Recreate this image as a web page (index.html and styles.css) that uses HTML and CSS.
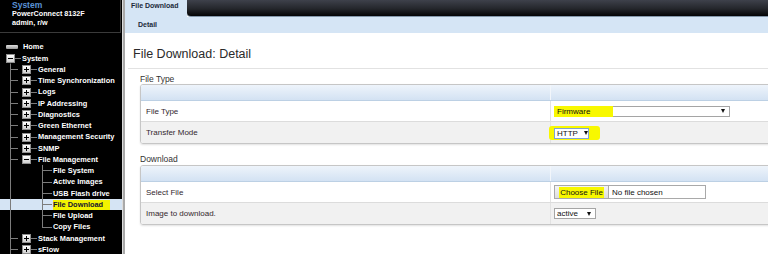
FILE: index.html
```html
<!DOCTYPE html>
<html>
<head>
<meta charset="utf-8">
<title>File Download</title>
<link rel="stylesheet" href="styles.css">
</head>
<body>
<div class="app">
  <aside class="sidebar">
    <div class="brand">
      <div class="brand-title">System</div>
      <div class="brand-line">PowerConnect 8132F</div>
      <div class="brand-line">admin, r/w</div>
    </div>
    <ul class="tree">
      <li class="row"><span class="cell"><i class="home-ico"></i></span><span class="label lp5">Home</span></li>
      <li class="row"><span class="cell tog down"><i class="box minus"></i></span><span class="label stub">System</span></li>
      <li class="row"><span class="cell j"></span><span class="cell tog"><i class="box plus"></i></span><span class="label stub">General</span></li>
      <li class="row"><span class="cell j"></span><span class="cell tog"><i class="box plus"></i></span><span class="label stub">Time Synchronization</span></li>
      <li class="row"><span class="cell j"></span><span class="cell tog"><i class="box plus"></i></span><span class="label stub">Logs</span></li>
      <li class="row"><span class="cell j"></span><span class="cell tog"><i class="box plus"></i></span><span class="label stub">IP Addressing</span></li>
      <li class="row"><span class="cell j"></span><span class="cell tog"><i class="box plus"></i></span><span class="label stub">Diagnostics</span></li>
      <li class="row"><span class="cell j"></span><span class="cell tog"><i class="box plus"></i></span><span class="label stub">Green Ethernet</span></li>
      <li class="row"><span class="cell j"></span><span class="cell tog"><i class="box plus"></i></span><span class="label stub">Management Security</span></li>
      <li class="row"><span class="cell j"></span><span class="cell tog"><i class="box plus"></i></span><span class="label stub">SNMP</span></li>
      <li class="row"><span class="cell j"></span><span class="cell tog"><i class="box minus"></i></span><span class="label stub">File Management</span></li>
      <li class="row"><span class="cell v"></span><span class="cell"></span><span class="cell j"></span><span class="label stub lv2">File System</span></li>
      <li class="row"><span class="cell v"></span><span class="cell"></span><span class="cell j"></span><span class="label stub lv2">Active Images</span></li>
      <li class="row"><span class="cell v"></span><span class="cell"></span><span class="cell j"></span><span class="label stub lv2">USB Flash drive</span></li>
      <li class="row current"><span class="cell v"></span><span class="cell"></span><span class="cell j"></span><span class="label stub lv2"><span class="marker">File Download</span></span></li>
      <li class="row"><span class="cell v"></span><span class="cell"></span><span class="cell j"></span><span class="label stub lv2">File Upload</span></li>
      <li class="row"><span class="cell v"></span><span class="cell"></span><span class="cell l"></span><span class="label stub lv2">Copy Files</span></li>
      <li class="row"><span class="cell j"></span><span class="cell tog"><i class="box plus"></i></span><span class="label stub">Stack Management</span></li>
      <li class="row"><span class="cell j"></span><span class="cell tog"><i class="box plus"></i></span><span class="label stub">sFlow</span></li>
    </ul>
  </aside>
  <main class="main">
    <div class="tabbar">
      <div class="tab">File Download</div>
      <div class="tabfill"></div>
    </div>
    <div class="subbar">Detail</div>
    <div class="content">
      <h1 class="title">File Download: Detail</h1>
      <div class="rule"></div>
      <section class="section">
        <div class="legend">File Type</div>
        <div class="grid">
          <div class="grow head"><div class="c1"></div><div class="c2"></div></div>
          <div class="grow r">
            <div class="c1">File Type</div>
            <div class="c2"><span class="sel wide"><span class="hl">Firmware</span><span class="caret"></span></span></div>
          </div>
          <div class="grow r alt">
            <div class="c1">Transfer Mode</div>
            <div class="c2"><span class="mark"><span class="sel focus">HTTP<span class="caret"></span></span></span></div>
          </div>
        </div>
      </section>
      <section class="section second">
        <div class="legend">Download</div>
        <div class="grid">
          <div class="grow head"><div class="c1"></div><div class="c2"></div></div>
          <div class="grow r">
            <div class="c1">Select File</div>
            <div class="c2"><span class="file"><span class="btn"><span class="hl2">Choose File</span></span><span class="fname">No file chosen</span></span></div>
          </div>
          <div class="grow r alt">
            <div class="c1">Image to download.</div>
            <div class="c2"><span class="sel small">active<span class="caret"></span></span></div>
          </div>
        </div>
      </section>
    </div>
  </main>
</div>
</body>
</html>
```
FILE: styles.css
```css
html, body {
  margin: 0;
  padding: 0;
  background: #fff;
  overflow: hidden;
  font-family: "Liberation Sans", Arial, sans-serif;
}

.app {
  display: flex;
  width: 768px;
  height: 254px;
  overflow: hidden;
}

/* ---------- sidebar ---------- */
.sidebar {
  width: 122px;
  flex: none;
  background: #000;
  border-right: 1px solid #dcdcdc;
  color: #fff;
  overflow: hidden;
}

.brand {
  width: 108px;
  height: 31px;
  padding: 1px 0 0 12px;
  border-right: 1px solid #3a3a3a;
  border-bottom: 1px solid #3a3a3a;
  line-height: 8.8px;
}

.brand-title {
  color: #5a92d6;
  font-weight: bold;
  font-size: 8.5px;
}

.brand-line {
  font-weight: bold;
  font-size: 7.2px;
  color: #fff;
}

.tree {
  list-style: none;
  margin: 0;
  padding: 8.4px 0 0 0;
}

.row {
  display: flex;
  height: 11.25px;
  padding-left: 2px;
  font-size: 7.4px;
  font-weight: bold;
  line-height: 11.25px;
  white-space: nowrap;
}

.cell {
  width: 16px;
  flex: none;
  display: flex;
  align-items: center;
}

.cell.v {
  background: linear-gradient(#7c7c7c, #7c7c7c) 8px 0 / 1px 100% no-repeat;
}

.cell.j {
  background:
    linear-gradient(#7c7c7c, #7c7c7c) 8px 0 / 1px 100% no-repeat,
    linear-gradient(#7c7c7c, #7c7c7c) 8px 50% / 8px 1px no-repeat;
}

.cell.l {
  background:
    linear-gradient(#7c7c7c, #7c7c7c) 8px 0 / 1px 50% no-repeat,
    linear-gradient(#7c7c7c, #7c7c7c) 8px 50% / 8px 1px no-repeat;
}

.cell.tog {
  background: linear-gradient(#7c7c7c, #7c7c7c) 12px 50% / 4px 1px no-repeat;
}

.cell.tog.down {
  background:
    linear-gradient(#7c7c7c, #7c7c7c) 12px 50% / 4px 1px no-repeat,
    linear-gradient(#7c7c7c, #7c7c7c) 8px 100% / 1px 50% no-repeat;
}

.box {
  display: block;
  width: 9px;
  height: 9px;
  box-sizing: border-box;
  margin-left: 4px;
  border: 1px solid #8e8e8e;
  position: relative;
  z-index: 1;
}

.box.plus {
  background:
    linear-gradient(#000, #000) center / 5px 1px no-repeat,
    linear-gradient(#000, #000) center / 1px 5px no-repeat,
    linear-gradient(#ffffff, #cfcfcf);
}

.box.minus {
  background:
    linear-gradient(#000, #000) center / 5px 1px no-repeat,
    linear-gradient(#ffffff, #cfcfcf);
}

.home-ico {
  display: block;
  width: 12px;
  height: 4px;
  margin-left: 4px;
  border-radius: 1px;
  background: linear-gradient(#e0e0e0, #9a9a9a);
}

.label {
  display: block;
}

.label.lp5 {
  padding-left: 5px;
}

.label.stub {
  padding-left: 4px;
  background: linear-gradient(#7c7c7c, #7c7c7c) 0 50% / 3px 1px no-repeat;
}

.label.stub.lv2 {
  padding-left: 3px;
  background: linear-gradient(#7c7c7c, #7c7c7c) 0 50% / 2px 1px no-repeat;
}

.row.current {
  background: #d5e4f4;
  color: #141430;
}

.marker {
  display: inline-block;
  line-height: 10px;
  padding-right: 7px;
  background: #f3f300;
}

/* ---------- main ---------- */
.main {
  flex: 1;
  min-width: 0;
  display: flex;
  flex-direction: column;
  border-left: 2px solid #a9a9a9;
  overflow: hidden;
}

.tabbar {
  display: flex;
  height: 17px;
  flex: none;
}

.tab {
  width: 56px;
  padding-left: 6px;
  background: #d5e5f5;
  font-size: 7px;
  font-weight: bold;
  color: #1c2a3a;
  line-height: 12px;
  white-space: nowrap;
}

.tabfill {
  flex: 1;
  height: 16px;
  background: linear-gradient(#3e414b, #24262b 55%, #040405);
  border-bottom: 1px solid #8497aa;
  border-bottom-left-radius: 4px;
}

.subbar {
  height: 16px;
  flex: none;
  background: #d5e5f5;
  padding-left: 13px;
  font-size: 7px;
  font-weight: bold;
  color: #1c2a3a;
  line-height: 16px;
}

.content {
  flex: 1;
  padding-left: 3px;
  color: #333;
}

.title {
  margin: 13px 0 0 5px;
  font-family: "Liberation Sans", Arial, sans-serif;
  font-weight: normal;
  font-size: 12.5px;
  line-height: 16px;
  color: #2a2a2a;
}

.rule {
  height: 1px;
  margin-top: 6px;
  background: #e2e2e2;
}

.section {
  margin: 0 -6px 0 12px;
}

.legend {
  height: 10px;
  margin-top: 5px;
  font-size: 8.5px;
  line-height: 10px;
  color: #333;
}

.section.second .legend {
  height: 11px;
  margin-top: 10px;
  line-height: 11px;
}

.grid {
  border: 1px solid #c6c6c6;
  border-radius: 3px;
  box-shadow: 0 1px 2px rgba(0, 0, 0, 0.12);
  overflow: hidden;
}

.grow {
  display: grid;
  grid-template-columns: 410px 1fr;
}

.grow.head {
  height: 15px;
  background: linear-gradient(#eef4fb, #d3e2f3);
  border-bottom: 1px solid #bcd0e4;
}

.grow.head .c1 {
  border-right: 1px solid #f2f6fb;
}

.grow.r {
  height: 20px;
  border-bottom: 1px solid #dcdcdc;
  background: #fff;
}

.grow.r.alt {
  height: 21px;
  border-bottom: none;
  background: #f1f1f1;
}

.c1 {
  display: flex;
  align-items: center;
  padding-left: 5px;
  border-right: 1px solid #e2e2e2;
  font-size: 8px;
  color: #33282e;
}

.c2 {
  display: flex;
  align-items: center;
  padding-left: 3px;
  font-size: 8px;
  color: #111;
}

/* ---------- controls ---------- */
.sel {
  display: inline-flex;
  align-items: center;
  justify-content: space-between;
  box-sizing: border-box;
  height: 11px;
  padding: 0 4px 0 2px;
  border: 1px solid #a5a5a5;
  background: #fff;
  font-size: 8px;
  color: #111;
}

.sel.wide {
  width: 176px;
  padding-left: 0;
}

.sel.focus {
  width: 35px;
  border-color: #7fa3d4;
}

.sel.small {
  width: 42px;
}

.caret {
  width: 0;
  height: 0;
  margin-left: 6px;
  border-left: 2.5px solid transparent;
  border-right: 2.5px solid transparent;
  border-top: 4px solid #111;
}

.hl {
  display: inline-flex;
  align-items: center;
  width: 59px;
  height: 11px;
  margin: -1px 0 -1px -1px;
  padding-left: 3px;
  box-sizing: border-box;
  background: #f8f800;
}

.mark {
  display: inline-flex;
  margin-left: -5px;
  padding: 2px 11px 1px 5px;
  border-radius: 3px;
  background: #f8f800;
}

.file {
  display: inline-flex;
  align-items: center;
  box-sizing: border-box;
  width: 152px;
  height: 14px;
  border: 1px solid #a9a9a9;
  background: #fff;
  font-size: 8px;
  color: #111;
}

.btn {
  display: flex;
  align-items: center;
  justify-content: center;
  width: 53px;
  height: 100%;
  border-right: 1px solid #a9a9a9;
  background: linear-gradient(#f5f5f5, #dddddd);
}

.hl2 {
  padding: 1px 1px;
  background: #f8f800;
}

.fname {
  margin-left: 3px;
}
```
